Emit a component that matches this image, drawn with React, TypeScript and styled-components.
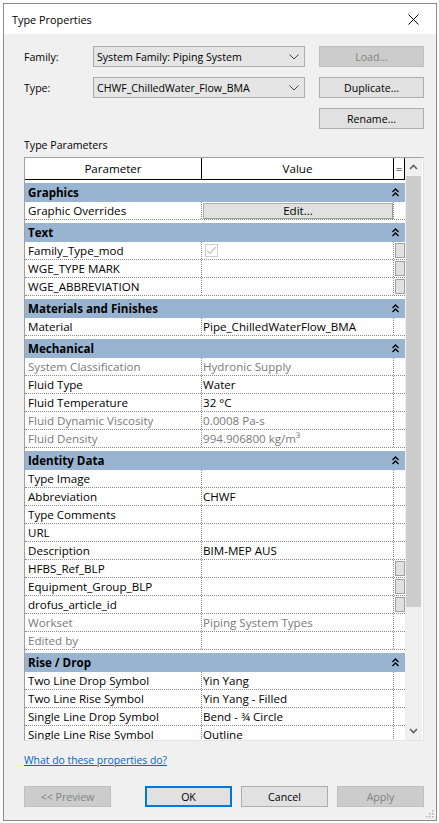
import React from 'react';
import styled, { createGlobalStyle } from 'styled-components';

const GlobalStyle = createGlobalStyle`
    body {
        margin: 0;
        background: #ffffff;
        font-family: 'Segoe UI', 'Open Sans', sans-serif;
        font-size: 10.6px;
        color: #000000;
    }
`;

const Dialog = styled.div`
    position: relative;
    box-sizing: border-box;
    width: 434px;
    height: 818px;
    margin: 3px 0 0 3px;
    border: 1px solid #8a8a8a;
    background: #f0f0f0;
    display: flex;
    flex-direction: column;
`;

const TitleBar = styled.div`
    height: 30px;
    background: #ffffff;
    display: flex;
    align-items: center;
    justify-content: space-between;
    padding: 0 8px 0 8px;
    font-size: 10.9px;
`;

const CloseButton = styled.div`
    width: 30px;
    display: flex;
    justify-content: center;
`;

const Body = styled.div`
    padding: 12px 11px 0 20px;
    display: flex;
    flex-direction: column;
`;

const Form = styled.div`
    display: grid;
    grid-template-columns: 55px 212px 105px;
    grid-auto-rows: 21px;
    column-gap: 14px;
    row-gap: 10px;
    align-items: center;
`;

const Label = styled.div`
    padding-left: 0px;
`;

const Select = styled.div`
    box-sizing: border-box;
    height: 21px;
    border: 1px solid #adadad;
    background: #e5e5e5;
    display: flex;
    align-items: center;
    justify-content: space-between;
    padding: 0 5px 0 3px;
`;

const Button = styled.div<{ disabled?: boolean; primary?: boolean }>`
    box-sizing: border-box;
    height: 21px;
    display: flex;
    align-items: center;
    justify-content: center;
    border: ${(p) => (p.primary ? '2px solid #0078d7' : p.disabled ? '1px solid #bfbfbf' : '1px solid #adadad')};
    background: ${(p) => (p.disabled ? '#cccccc' : '#e1e1e1')};
    color: ${(p) => (p.disabled ? '#838383' : '#000000')};
`;

const SectionLabel = styled.div`
    margin-top: 8px;
    line-height: 16px;
    padding-left: 0px;
`;

const Frame = styled.div`
    margin-top: 4px;
    width: 400px;
    box-sizing: border-box;
    height: 584px;
    border: 1px solid #e3e3e3;
    border-top-color: #a0a0a0;
    border-left-color: #a0a0a0;
    background: #ffffff;
    display: flex;
    font-size: 11.6px;
`;

const GridArea = styled.div`
    width: 381px;
    display: flex;
    flex-direction: column;
`;

const Columns = styled.div`
    display: grid;
    grid-template-columns: 176px 192px 12px;
`;

const HeaderRow = styled(Columns)`
    height: 22px;
    box-sizing: border-box;
    border-bottom: 1px solid #000000;
    background: #ffffff;
`;

const HeaderCell = styled.div<{ first?: boolean; last?: boolean }>`
    display: flex;
    align-items: center;
    justify-content: center;
    border-left: ${(p) => (p.first ? 'none' : '1px solid #000000')};
    border-right: ${(p) => (p.last ? '1px solid #000000' : 'none')};
`;

const ListArea = styled.div`
    flex: 1;
    overflow: hidden;
`;

const GroupRow = styled.div`
    margin-top: 3px;
    height: 19px;
    width: 380px;
    box-sizing: border-box;
    background: #99b4d1;
    display: flex;
    align-items: center;
    justify-content: space-between;
    padding: 0 6px 0 3px;
    font-weight: 700;
`;

const Row = styled(Columns)`
    height: 18px;
    box-sizing: border-box;
    border-bottom: 1px dotted #8a8a8a;
`;

const Cell = styled.div<{ disabled?: boolean; divided?: boolean }>`
    display: flex;
    align-items: center;
    padding-left: ${(p) => (p.divided ? '1px' : '3px')};
    border-left: ${(p) => (p.divided ? '1px dotted #8a8a8a' : 'none')};
    color: ${(p) => (p.disabled ? '#7a7a7a' : '#000000')};
    white-space: nowrap;
    overflow: hidden;
`;

const EditButton = styled.div`
    box-sizing: border-box;
    width: 190px;
    height: 16px;
    border: 1px solid #adadad;
    border-right-color: #9a9a9a;
    border-bottom-color: #9a9a9a;
    background: #e1e1e1;
    display: flex;
    align-items: center;
    justify-content: center;
`;

const CheckBox = styled.div`
    box-sizing: border-box;
    width: 13px;
    height: 13px;
    margin-left: 2px;
    border: 1px solid #cccccc;
    display: flex;
    align-items: center;
    justify-content: center;
`;

const MiniButton = styled.div`
    box-sizing: border-box;
    width: 10px;
    height: 15px;
    border: 1px solid #a0a0a0;
    background: #e1e1e1;
`;

const ScrollBar = styled.div`
    width: 17px;
    background: #f0f0f0;
    display: flex;
    flex-direction: column;
    border-right: 1px solid #ffffff;
`;

const ScrollArrow = styled.div`
    height: 18px;
    display: flex;
    align-items: center;
    justify-content: center;
`;

const ScrollTrack = styled.div`
    flex: 1;
    display: flex;
    flex-direction: column;
`;

const ScrollThumb = styled.div`
    height: 431px;
    margin: 0 1px;
    background: #cdcdcd;
`;

const HelpLink = styled.a`
    margin-top: 11px;
    align-self: flex-start;
    line-height: 16px;
    color: #0066cc;
    text-decoration: underline;
    font-size: 10.4px;
`;

const ButtonBar = styled.div`
    margin-top: 18px;
    width: 400px;
    display: flex;
    justify-content: space-between;
`;

const ButtonGroup = styled.div`
    display: flex;
    gap: 9px;
`;

const DialogButton = styled(Button)`
    width: 87px;
`;

const Grip = styled.svg`
    position: absolute;
    right: 2px;
    bottom: 2px;
`;

const Chevrons = () => (
    <svg width="7" height="9" viewBox="0 0 7 9">
        <path d="M0.5 4 L3.5 1 L6.5 4 M0.5 8 L3.5 5 L6.5 8" fill="none" stroke="#000" strokeWidth="1.3" />
    </svg>
);

const DropArrow = () => (
    <svg width="10" height="6" viewBox="0 0 10 6">
        <path d="M0.5 0.5 L5 5 L9.5 0.5" fill="none" stroke="#444" strokeWidth="1" />
    </svg>
);

type Param = {
    name: string;
    value?: string;
    disabled?: boolean;
    kind?: 'edit' | 'check';
    mini?: boolean;
};

type Group = { title: string; params: Param[] };

const groups: Group[] = [
    { title: 'Graphics', params: [{ name: 'Graphic Overrides', kind: 'edit' }] },
    {
        title: 'Text',
        params: [
            { name: 'Family_Type_mod', kind: 'check', mini: true },
            { name: 'WGE_TYPE MARK', mini: true },
            { name: 'WGE_ABBREVIATION', mini: true },
        ],
    },
    { title: 'Materials and Finishes', params: [{ name: 'Material', value: 'Pipe_ChilledWaterFlow_BMA' }] },
    {
        title: 'Mechanical',
        params: [
            { name: 'System Classification', value: 'Hydronic Supply', disabled: true },
            { name: 'Fluid Type', value: 'Water' },
            { name: 'Fluid Temperature', value: '32 °C' },
            { name: 'Fluid Dynamic Viscosity', value: '0.0008 Pa-s', disabled: true },
            { name: 'Fluid Density', value: '994.906800 kg/m³', disabled: true },
        ],
    },
    {
        title: 'Identity Data',
        params: [
            { name: 'Type Image' },
            { name: 'Abbreviation', value: 'CHWF' },
            { name: 'Type Comments' },
            { name: 'URL' },
            { name: 'Description', value: 'BIM-MEP AUS' },
            { name: 'HFBS_Ref_BLP', mini: true },
            { name: 'Equipment_Group_BLP', mini: true },
            { name: 'drofus_article_id', mini: true },
            { name: 'Workset', value: 'Piping System Types', disabled: true },
            { name: 'Edited by', disabled: true },
        ],
    },
    {
        title: 'Rise / Drop',
        params: [
            { name: 'Two Line Drop Symbol', value: 'Yin Yang' },
            { name: 'Two Line Rise Symbol', value: 'Yin Yang - Filled' },
            { name: 'Single Line Drop Symbol', value: 'Bend - ¾ Circle' },
            { name: 'Single Line Rise Symbol', value: 'Outline' },
        ],
    },
];

const ValueContent = ({ param }: { param: Param }) => {
    if (param.kind === 'edit') return <EditButton>Edit...</EditButton>;
    if (param.kind === 'check')
        return (
            <CheckBox>
                <svg width="11" height="9" viewBox="0 0 11 9">
                    <path d="M1 4.5 L4 7.5 L10 1" fill="none" stroke="#c4c4c4" strokeWidth="1.2" />
                </svg>
            </CheckBox>
        );
    return <>{param.value}</>;
};

export default function App() {
    return (
        <>
            <GlobalStyle />
            <Dialog>
                <TitleBar>
                    <span>Type Properties</span>
                    <CloseButton>
                        <svg width="11" height="11" viewBox="0 0 11 11">
                            <path d="M0.5 0.5 L10.5 10.5 M10.5 0.5 L0.5 10.5" stroke="#000" strokeWidth="1" />
                        </svg>
                    </CloseButton>
                </TitleBar>
                <Body>
                    <Form>
                        <Label>Family:</Label>
                        <Select>
                            <span>System Family: Piping System</span>
                            <DropArrow />
                        </Select>
                        <Button disabled>Load...</Button>
                        <Label>Type:</Label>
                        <Select>
                            <span>CHWF_ChilledWater_Flow_BMA</span>
                            <DropArrow />
                        </Select>
                        <Button>Duplicate...</Button>
                        <span />
                        <span />
                        <Button>Rename...</Button>
                    </Form>
                    <SectionLabel>Type Parameters</SectionLabel>
                    <Frame>
                        <GridArea>
                            <HeaderRow>
                                <HeaderCell first>Parameter</HeaderCell>
                                <HeaderCell>Value</HeaderCell>
                                <HeaderCell last>=</HeaderCell>
                            </HeaderRow>
                            <ListArea>
                                {groups.map((group) => (
                                    <React.Fragment key={group.title}>
                                        <GroupRow>
                                            <span>{group.title}</span>
                                            <Chevrons />
                                        </GroupRow>
                                        {group.params.map((param) => (
                                            <Row key={param.name}>
                                                <Cell disabled={param.disabled}>{param.name}</Cell>
                                                <Cell divided disabled={param.disabled}>
                                                    <ValueContent param={param} />
                                                </Cell>
                                                <Cell divided>{param.mini && <MiniButton />}</Cell>
                                            </Row>
                                        ))}
                                    </React.Fragment>
                                ))}
                            </ListArea>
                        </GridArea>
                        <ScrollBar>
                            <ScrollArrow>
                                <svg width="9" height="6" viewBox="0 0 9 6">
                                    <path d="M1 5 L4.5 1.5 L8 5" fill="none" stroke="#606060" strokeWidth="1.6" />
                                </svg>
                            </ScrollArrow>
                            <ScrollTrack>
                                <ScrollThumb />
                            </ScrollTrack>
                            <ScrollArrow>
                                <svg width="9" height="6" viewBox="0 0 9 6">
                                    <path d="M1 1 L4.5 4.5 L8 1" fill="none" stroke="#606060" strokeWidth="1.6" />
                                </svg>
                            </ScrollArrow>
                        </ScrollBar>
                    </Frame>
                    <HelpLink>What do these properties do?</HelpLink>
                    <ButtonBar>
                        <DialogButton disabled>&lt;&lt; Preview</DialogButton>
                        <ButtonGroup>
                            <DialogButton primary>OK</DialogButton>
                            <DialogButton>Cancel</DialogButton>
                            <DialogButton disabled>Apply</DialogButton>
                        </ButtonGroup>
                    </ButtonBar>
                </Body>
                <Grip width="8" height="8" viewBox="0 0 8 8">
                    <rect x="6" y="0" width="1.5" height="1.5" fill="#b0b0b0" />
                    <rect x="3" y="3" width="1.5" height="1.5" fill="#b0b0b0" />
                    <rect x="6" y="3" width="1.5" height="1.5" fill="#b0b0b0" />
                    <rect x="0" y="6" width="1.5" height="1.5" fill="#b0b0b0" />
                    <rect x="3" y="6" width="1.5" height="1.5" fill="#b0b0b0" />
                    <rect x="6" y="6" width="1.5" height="1.5" fill="#b0b0b0" />
                </Grip>
            </Dialog>
        </>
    );
}
